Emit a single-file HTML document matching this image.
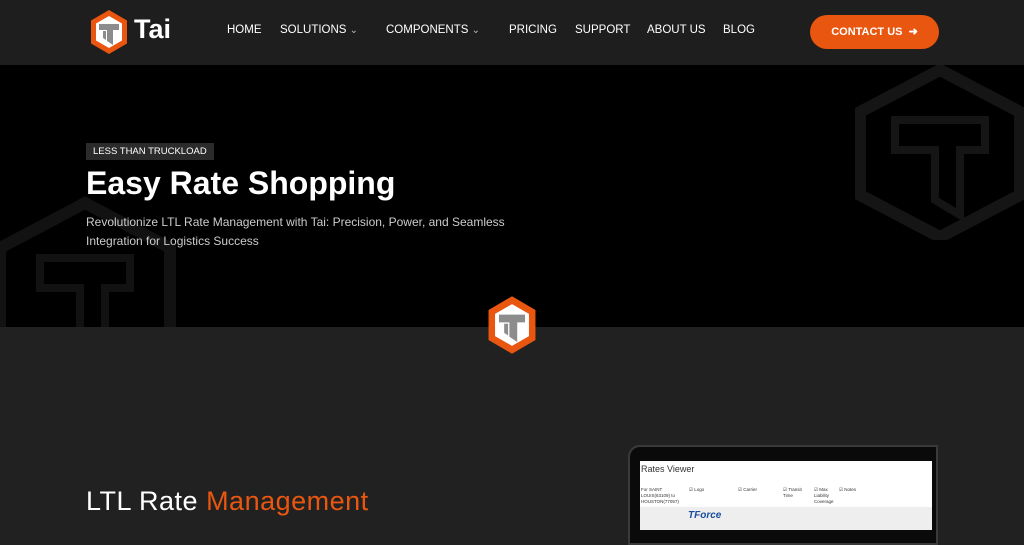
<!DOCTYPE html>
<html><head><meta charset="utf-8"><style>
*{margin:0;padding:0;box-sizing:border-box}
body{width:1024px;height:530px;overflow:hidden;background:#212121;font-family:"Liberation Sans",sans-serif;position:relative}
.hdr{position:absolute;left:0;top:0;width:1024px;height:65px;background:#1e1e1e}
.nav{position:absolute;top:24px;color:#fff;font-size:11.5px;letter-spacing:0}
.hero{position:absolute;left:0;top:65px;width:1024px;height:262px;background:#000;overflow:hidden}
.btn{position:absolute;left:810px;top:15px;width:129px;height:34px;border-radius:17px;background:#e8560f;color:#fff;font-size:11px;font-weight:bold;text-align:center;line-height:34px}
</style></head><body>
<div class="hdr">
<svg style="position:absolute;left:89px;top:9px" width="40" height="46" viewBox="0 0 40 46"><polygon points="20,1 38,11.5 38,34.5 20,45 2,34.5 2,11.5" fill="#e8560f"/><polygon points="20,7 33,14.5 33,31.5 20,39 7,31.5 7,14.5" fill="#fff"/><path d="M10 15 L30 15 L30 21 L24 21 L24 36 L18 32 L18 21 L10 21 Z" fill="#8c8c8c"/><path d="M14 22 L17 22 L17 31 L14 29Z" fill="#8c8c8c"/></svg>
<div style="position:absolute;left:134px;top:14px;color:#fff;font-size:27px;font-weight:bold">Tai</div>
<div class="nav" style="left:227px">HOME</div>
<div class="nav" style="left:280px">SOLUTIONS <span style="font-size:10px;color:#bbb">&#8964;</span></div>
<div class="nav" style="left:386px">COMPONENTS <span style="font-size:10px;color:#bbb">&#8964;</span></div>
<div class="nav" style="left:509px">PRICING</div>
<div class="nav" style="left:575px">SUPPORT</div>
<div class="nav" style="left:647px">ABOUT US</div>
<div class="nav" style="left:723px">BLOG</div>
<div class="btn">CONTACT US &nbsp;&#10140;</div>
</div>
<div class="hero">
<svg style="position:absolute;left:855px;top:0" width="180" height="175" viewBox="0 0 180 175"><polygon points="85,5 165,47 165,130 85,172 5,130 5,47" fill="none" stroke="#151515" stroke-width="12"/><path d="M40 55 L130 55 L130 85 L105 85 L105 150 L80 135 L80 85 L40 85Z" fill="none" stroke="#151515" stroke-width="8"/></svg>
<svg style="position:absolute;left:-10px;top:128px" width="200" height="140" viewBox="0 0 200 140"><polygon points="95,10 180,55 180,150 95,195 10,150 10,55" fill="none" stroke="#121212" stroke-width="12"/><path d="M50 65 L140 65 L140 95 L115 95 L115 160 L90 145 L90 95 L50 95Z" fill="none" stroke="#121212" stroke-width="8"/></svg>
<div style="position:absolute;left:86px;top:78px;background:#2b2b2b;color:#fff;font-size:9.5px;padding:3px 7px">LESS THAN TRUCKLOAD</div>
<div style="position:absolute;left:86px;top:100px;color:#fff;font-size:32px;font-weight:bold">Easy Rate Shopping</div>
<div style="position:absolute;left:86px;top:148px;color:#ccc;font-size:12px;line-height:19px;width:430px">Revolutionize LTL Rate Management with Tai: Precision, Power, and Seamless Integration for Logistics Success</div>
</div>
<svg style="position:absolute;left:485px;top:295px" width="54" height="60" viewBox="0 0 40 46"><polygon points="20,1 38,11.5 38,34.5 20,45 2,34.5 2,11.5" fill="#e8560f"/><polygon points="20,7 33,14.5 33,31.5 20,39 7,31.5 7,14.5" fill="#fff"/><path d="M10 15 L30 15 L30 21 L24 21 L24 36 L18 32 L18 21 L10 21 Z" fill="#8c8c8c"/><path d="M14 22 L17 22 L17 31 L14 29Z" fill="#8c8c8c"/></svg>
<div style="position:absolute;left:86px;top:486px;color:#fff;font-size:27px;letter-spacing:.5px">LTL Rate <span style="color:#e8560f">Management</span></div>
<div style="position:absolute;left:628px;top:445px;width:310px;height:100px;background:#0a0a0a;border:2px solid #3a3a3a;border-radius:12px 0 0 0"></div>
<div style="position:absolute;left:640px;top:461px;width:292px;height:69px;background:#fff;font-size:8px;color:#333">
<div style="padding:3px 1px;font-size:9px">Rates Viewer</div>
<div style="position:absolute;top:26px;left:1px;font-size:4.5px;line-height:6px;width:290px">
<span style="position:absolute;left:0">For SAINT<br>LOUIS(63109) to<br>HOUSTON(77057)</span>
<span style="position:absolute;left:48px">&#9745; Logo</span><span style="position:absolute;left:97px">&#9745; Carrier</span><span style="position:absolute;left:142px">&#9745; Transit<br>Time</span><span style="position:absolute;left:173px">&#9745; Max<br>Liability<br>Coverage</span><span style="position:absolute;left:198px">&#9745; Notes</span></div>
<div style="position:absolute;top:46px;left:0;width:292px;height:23px;background:#eee"></div>
<div style="position:absolute;top:49px;left:48px;color:#1a4fa0;font-weight:bold;font-style:italic;font-size:10px">TForce</div>
</div>
</body></html>
